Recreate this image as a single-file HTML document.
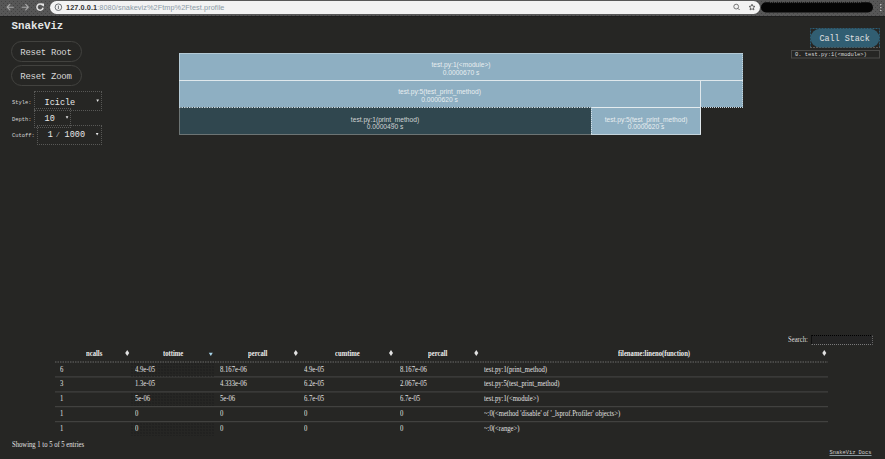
<!DOCTYPE html>
<html><head><meta charset="utf-8">
<style>
*{margin:0;padding:0;box-sizing:border-box}
html,body{width:885px;height:459px;overflow:hidden;background:#262624;position:relative}
body{font-family:"Liberation Sans",sans-serif}
.a{position:absolute;white-space:nowrap}
#chrome{left:0;top:0;width:885px;height:16px;background-color:#575757;
 background-image:radial-gradient(circle at 1.5px 1.5px,#444 0.45px,transparent 0.9px),radial-gradient(circle at 1.5px 1.5px,#444 0.45px,transparent 0.9px);background-size:4px 4px,4px 4px;background-position:0 0,2px 2px}
#chromeb{left:0;top:16px;width:885px;height:1px;background:#1e1e1e}
#url{left:50px;top:1px;width:710px;height:13px;border-radius:7px;background:#f2f2f2}
.mono{font-family:"Liberation Mono",monospace}
.lbl{font-family:"Liberation Mono",monospace;color:#d4d4d4;font-size:5.4px;line-height:6px}
.stxt{font-family:"Liberation Mono",monospace;color:#e8e8e8;font-size:8.5px;line-height:10px}
.it{position:absolute;color:#e8eef0;font-size:6.65px;line-height:7.2px;text-align:center;white-space:nowrap}
.sr{font-family:"Liberation Serif",serif;font-size:7.5px;line-height:8px;transform:scaleX(0.887);transform-origin:0 0}
.th{font-weight:bold;color:#ececec}
.td{color:#e2e2e2}
</style></head><body>
<div class="a" id="chrome"></div><div class="a" id="chromeb"></div><div class="a" id="url"></div>
<svg class="a" style="left:0;top:0" width="885" height="17" viewBox="0 0 885 17">
 <g fill="none" stroke="#a8a8a8" stroke-width="1.1" stroke-linecap="round" stroke-linejoin="round">
  <path d="M13.3 7.2H7.2M9.8 4.5L7.1 7.2L9.8 9.9"/>
  <path d="M22.2 7.2H28.3M25.7 4.5L28.4 7.2L25.7 9.9"/>
 </g>
 <g fill="none" stroke="#e6e6e6" stroke-width="1.5">
  <path d="M42.7 5.5A3.1 3.1 0 1 0 43.1 7.6"/>
 </g>
 <path d="M40.8 3.6L44 3.6L44 6.8Z" fill="#e6e6e6"/>
 <circle cx="58.4" cy="7.2" r="3.3" fill="none" stroke="#5f6368" stroke-width="0.9"/>
 <path d="M58.4 5.6V9" stroke="#5f6368" stroke-width="0.9"/>
 <circle cx="736.2" cy="6.6" r="2.4" fill="none" stroke="#6a6a6a" stroke-width="0.9"/>
 <path d="M737.9 8.3L739.6 10" stroke="#6a6a6a" stroke-width="1"/>
 <path d="M752 4.2L752.9 6.2L755 6.4L753.4 7.8L753.9 9.9L752 8.8L750.1 9.9L750.6 7.8L749 6.4L751.1 6.2Z" fill="none" stroke="#555" stroke-width="0.9" stroke-linejoin="round"/>
 <rect x="761" y="2.3" width="112" height="10.2" rx="5.1" fill="#050505"/>
 <path d="M770 2.6H862" stroke="#777" stroke-width="0.5" stroke-dasharray="1 1"/>
 <circle cx="880.8" cy="4.8" r="0.7" fill="#d8d8d8"/>
 <circle cx="880.8" cy="7.6" r="0.7" fill="#d8d8d8"/>
 <circle cx="880.8" cy="10.4" r="0.7" fill="#d8d8d8"/>
</svg>
<div class="a" style="left:66px;top:3.5px;font-size:7.3px;line-height:8px;letter-spacing:0.08px;color:#333"><b>127.0.0.1</b><span style="color:#8a9aa6">:8080/snakeviz%2Ftmp%2Ftest.profile</span></div>
<div class="a mono" style="left:11.5px;top:20px;font-size:10.8px;line-height:12px;font-weight:bold;color:#e4e6e6">SnakeViz</div>
<svg class="a" style="left:0;top:35px" width="110" height="115" viewBox="0 35 110 115">
 <rect x="11.5" y="41.5" width="70" height="20" rx="10" fill="none" stroke="#42423f" stroke-width="1"/>
 <rect x="11.5" y="65.5" width="70" height="20" rx="10" fill="none" stroke="#42423f" stroke-width="1"/>
 <path d="M96.3 99.6H99L97.65 102Z" fill="#e8e8e8"/>
 <path d="M65.7 116.3H68.4L67.05 118.7Z" fill="#e8e8e8"/>
 <path d="M95.8 133H98.5L97.15 135.4Z" fill="#e8e8e8"/>
</svg>
<div class="a" style="left:34px;top:91px;width:68px;height:20px;border:1px dotted #585856"></div>
<div class="a" style="left:34px;top:108px;width:37px;height:19.5px;border:1px dotted #585856"></div>
<div class="a" style="left:37px;top:125px;width:64.5px;height:19.5px;border:1px dotted #585856"></div>
<div class="a mono" style="left:20.3px;top:47.50px;font-size:9.0px;line-height:10px;letter-spacing:-0.28px;color:#d8d8d8">Reset Root</div>
<div class="a mono" style="left:20.3px;top:71.50px;font-size:9.0px;line-height:10px;letter-spacing:-0.28px;color:#d8d8d8">Reset Zoom</div>
<div class="a lbl" style="left:12px;top:100.36px">Style:</div>
<div class="a lbl" style="left:12px;top:116.96px">Depth:</div>
<div class="a lbl" style="left:12px;top:133.46px">Cutoff:</div>
<div class="a stxt" style="left:44.6px;top:97.73px">Icicle</div>
<div class="a stxt" style="left:44.6px;top:113.63px">10</div>
<div class="a stxt" style="left:47.8px;top:130.43px">1</div>
<div class="a stxt" style="left:55.8px;top:130.43px;color:#bbb;font-size:7px">/</div>
<div class="a stxt" style="left:64.6px;top:130.43px">1000</div>
<svg class="a" style="left:0;top:0" width="885" height="140" viewBox="0 0 885 140">
 <rect x="179" y="53" width="564" height="27" fill="#8eafc2"/>
 <rect x="179" y="80" width="564" height="27" fill="#8eafc2"/>
 <rect x="179" y="107" width="412" height="27" fill="#30474f"/>
 <rect x="591" y="107" width="110" height="28" fill="#8eafc2"/>
 <path d="M179 53.5H743M179.5 53V107" stroke="#b4cad6" stroke-width="1"/>
 <path d="M179.5 107V134" stroke="#6c7474" stroke-width="1"/>
 <path d="M179 134.5H591" stroke="#6c7474" stroke-width="1"/>
 <path d="M179 80.5H743" stroke="#dfe8ec" stroke-width="1"/>
 <path d="M179 107.5H591" stroke="#c8d6dc" stroke-width="1" stroke-dasharray="1.5 1"/>
 <path d="M591 107.5H701" stroke="#e4ecef" stroke-width="1"/>
 <path d="M700 107.5H743" stroke="#c8d6de" stroke-width="1" stroke-dasharray="1 1"/>
 <path d="M700.5 80V135" stroke="#e0e8ec" stroke-width="1"/>
 <path d="M742.5 53V108" stroke="#c4d4dc" stroke-width="1" stroke-dasharray="1 1"/>
 <path d="M591.5 107V134" stroke="#d4e0e6" stroke-width="1" stroke-dasharray="1 1"/>
 <path d="M591 134.5H701" stroke="#c4d4dc" stroke-width="1"/>
</svg>
<div class="it" style="left:179px;width:564px;top:61.4px">test.py:1(&lt;module&gt;)<br>0.0000670 s</div>
<div class="it" style="left:179px;width:521px;top:88.3px">test.py:5(test_print_method)<br>0.0000620 s</div>
<div class="it" style="left:179px;width:412px;top:115.8px;color:#d0d4d4">test.py:1(print_method)<br>0.0000490 s</div>
<div class="it" style="left:591px;width:110px;top:115.8px">test.py:5(test_print_method)<br>0.0000620 s</div>
<svg class="a" style="left:785px;top:25px" width="100" height="36" viewBox="785 25 100 36">
 <path d="M810.5 47.5V28.5H879.5V47.5" fill="none" stroke="#2b5f78" stroke-width="1" stroke-dasharray="2 1"/><path d="M810 47.5H880" stroke="#5e5a56" stroke-width="1" stroke-dasharray="2 1"/>
 <rect x="810.6" y="28.8" width="68.8" height="18.6" rx="9.3" fill="#315e72"/>
 <rect x="791.5" y="50.5" width="88" height="7.5" fill="none" stroke="#4a4a48" stroke-width="1"/>
</svg>
<div class="a mono" style="left:819.5px;top:33.96px;font-size:8.4px;line-height:10px;color:#e0e0e0">Call Stack</div>
<div class="a mono" style="left:795px;top:51.55px;font-size:5.45px;line-height:6px;color:#dcdcdc">0. test.py:1(&lt;module&gt;)</div>
<div class="a sr td" style="left:788px;top:336.07px;color:#dadada">Search:</div>
<div class="a" style="left:811px;top:335px;width:62px;height:10px;border-top:1px dotted #000;border-left:1px solid #111;border-bottom:1px dotted #7a7a7a;border-right:1px dotted #666;background:#242424"></div>
<div class="a sr th" style="left:85.5px;top:349.97px;">ncalls</div>
<div class="a sr th" style="left:162.9px;top:349.97px;">tottime</div>
<div class="a sr th" style="left:247.7px;top:349.97px;">percall</div>
<div class="a sr th" style="left:335px;top:349.97px;">cumtime</div>
<div class="a sr th" style="left:428px;top:349.97px;">percall</div>
<div class="a sr th" style="left:618px;top:349.97px;">filename:lineno(function)</div>
<svg class="a" style="left:0;top:340px" width="885" height="100" viewBox="0 340 885 100"><path d="M127.2 350L129.2 352.9L127.2 356.0L125.2 352.9Z" fill="#e2e2e2"/><path d="M295.8 350L297.8 352.9L295.8 356.0L293.8 352.9Z" fill="#e2e2e2"/><path d="M391.0 350L393.0 352.9L391.0 356.0L389.0 352.9Z" fill="#e2e2e2"/><path d="M476.3 350L478.3 352.9L476.3 356.0L474.3 352.9Z" fill="#e2e2e2"/><path d="M824.3 350L826.3 352.9L824.3 356.0L822.3 352.9Z" fill="#e2e2e2"/><path d="M208.8 352.8H212.8L210.8 356Z" fill="#a8d4ea"/><path d="M55 362H828" stroke="#6a6a68" stroke-width="1" stroke-dasharray="1.5 1"/><path d="M55 376.90H828" stroke="#41413f" stroke-width="1.2"/><path d="M55 391.80H828" stroke="#41413f" stroke-width="1.2"/><path d="M55 406.70H828" stroke="#41413f" stroke-width="1.2"/><path d="M55 421.60H828" stroke="#41413f" stroke-width="1.2"/></svg>
<div class="a" style="left:131px;top:363px;width:83px;height:14px;background-image:radial-gradient(circle at 1px 1px,#1c1c1c 0.5px,transparent 0.9px);background-size:3px 3px"></div>
<div class="a" style="left:131px;top:393px;width:83px;height:13px;background-image:radial-gradient(circle at 1px 1px,#1c1c1c 0.5px,transparent 0.9px);background-size:3px 3px"></div>
<div class="a" style="left:131px;top:423px;width:83px;height:13px;background-image:radial-gradient(circle at 1px 1px,#1c1c1c 0.5px,transparent 0.9px);background-size:3px 3px"></div>
<div class="a sr td" style="left:60.2px;top:365.57px;">6</div>
<div class="a sr td" style="left:135.2px;top:365.57px;">4.9e-05</div>
<div class="a sr td" style="left:219.5px;top:365.57px;">8.167e-06</div>
<div class="a sr td" style="left:304.4px;top:365.57px;">4.9e-05</div>
<div class="a sr td" style="left:399.6px;top:365.57px;">8.167e-06</div>
<div class="a sr td" style="left:484.4px;top:365.57px;">test.py:1(print_method)</div>
<div class="a sr td" style="left:60.2px;top:380.44px;">3</div>
<div class="a sr td" style="left:135.2px;top:380.44px;">1.3e-05</div>
<div class="a sr td" style="left:219.5px;top:380.44px;">4.333e-06</div>
<div class="a sr td" style="left:304.4px;top:380.44px;">6.2e-05</div>
<div class="a sr td" style="left:399.6px;top:380.44px;">2.067e-05</div>
<div class="a sr td" style="left:484.4px;top:380.44px;">test.py:5(test_print_method)</div>
<div class="a sr td" style="left:60.2px;top:395.32px;">1</div>
<div class="a sr td" style="left:135.2px;top:395.32px;">5e-06</div>
<div class="a sr td" style="left:219.5px;top:395.32px;">5e-06</div>
<div class="a sr td" style="left:304.4px;top:395.32px;">6.7e-05</div>
<div class="a sr td" style="left:399.6px;top:395.32px;">6.7e-05</div>
<div class="a sr td" style="left:484.4px;top:395.32px;">test.py:1(&lt;module&gt;)</div>
<div class="a sr td" style="left:60.2px;top:410.19px;">1</div>
<div class="a sr td" style="left:135.2px;top:410.19px;">0</div>
<div class="a sr td" style="left:219.5px;top:410.19px;">0</div>
<div class="a sr td" style="left:304.4px;top:410.19px;">0</div>
<div class="a sr td" style="left:399.6px;top:410.19px;">0</div>
<div class="a sr td" style="left:484.4px;top:410.19px;">~:0(&lt;method 'disable' of '_lsprof.Profiler' objects&gt;)</div>
<div class="a sr td" style="left:60.2px;top:425.07px;">1</div>
<div class="a sr td" style="left:135.2px;top:425.07px;">0</div>
<div class="a sr td" style="left:219.5px;top:425.07px;">0</div>
<div class="a sr td" style="left:304.4px;top:425.07px;">0</div>
<div class="a sr td" style="left:399.6px;top:425.07px;">0</div>
<div class="a sr td" style="left:484.4px;top:425.07px;">~:0(&lt;range&gt;)</div>
<div class="a sr td" style="left:11.5px;top:440.87px;">Showing 1 to 5 of 5 entries</div>
<div class="a mono" style="left:829.5px;top:450.46px;font-size:5.4px;line-height:6px;color:#d0d0d0;text-decoration:underline;text-decoration-color:#8a9aa2">SnakeViz Docs</div>
</body></html>
